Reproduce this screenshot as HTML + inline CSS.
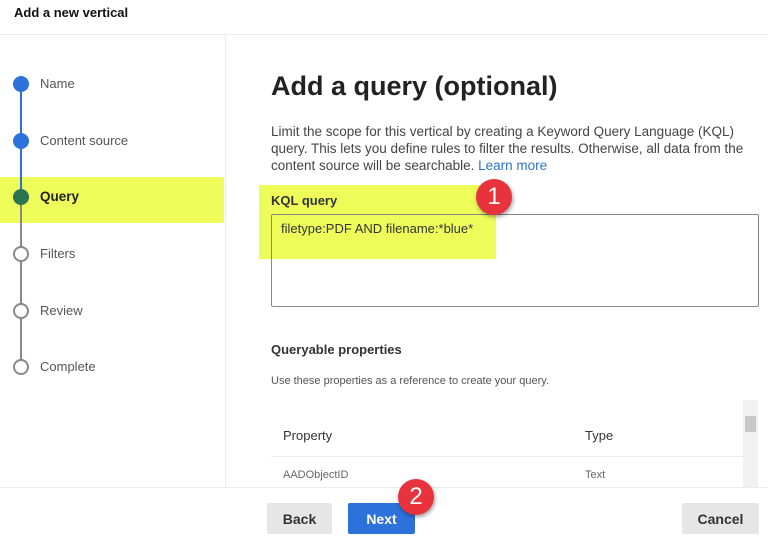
<!DOCTYPE html>
<html><head><style>
*{margin:0;padding:0;box-sizing:border-box}
body{width:768px;height:537px;overflow:hidden;background:#fff;font-family:"Liberation Sans",sans-serif;color:#323130;position:relative}
.a{position:absolute}
.t{font-size:13px;color:#555}
.dot{position:absolute;left:13px;width:16px;height:16px;border-radius:50%}
.open{border:2px solid #8a8886;background:#fff}
.btn{position:absolute;top:503px;height:31px;font-size:14px;font-weight:bold;display:flex;align-items:center;justify-content:center;border-radius:2px}
.badge{position:absolute;width:36px;height:36px;border-radius:50%;background:#e8323c;color:#fff;font-size:24px;display:flex;align-items:center;justify-content:center;box-shadow:1px 2px 4px rgba(0,0,0,.4)}
</style></head><body>
<div class="a" style="left:14px;top:5px;font-size:13px;font-weight:bold;color:#111">Add a new vertical</div>
<div class="a" style="left:0;top:34px;width:768px;height:1px;background:#edebe9"></div>
<div class="a" style="left:225px;top:35px;width:1px;height:452px;background:#edebe9"></div>
<div class="a" style="left:0;top:177px;width:224px;height:46px;background:#eefc5a"></div>
<div class="a" style="left:20px;top:92px;width:2px;height:105px;background:#2d6fd6"></div>
<div class="a" style="left:20px;top:205px;width:2px;height:160px;background:#8a8886"></div>
<div class="dot" style="top:76px;background:#2d72db"></div>
<div class="dot" style="top:133px;background:#2d72db"></div>
<div class="dot" style="top:189px;background:#2c7350"></div>
<div class="dot open" style="top:246px"></div>
<div class="dot open" style="top:303px"></div>
<div class="dot open" style="top:359px"></div>
<div class="a t" style="left:40px;top:76px">Name</div>
<div class="a t" style="left:40px;top:133px">Content source</div>
<div class="a" style="left:40px;top:189px;font-size:13.5px;font-weight:bold;color:#222">Query</div>
<div class="a t" style="left:40px;top:246px">Filters</div>
<div class="a t" style="left:40px;top:303px">Review</div>
<div class="a t" style="left:40px;top:359px">Complete</div>

<div class="a" style="left:271px;top:71px;font-size:27px;font-weight:bold;color:#222">Add a query (optional)</div>
<div class="a" style="left:271px;top:123px;width:490px;font-size:13.5px;line-height:17px;color:#444">Limit the scope for this vertical by creating a Keyword Query Language (KQL) query. This lets you define rules to filter the results. Otherwise, all data from the content source will be searchable. <span style="color:#2b75c9">Learn more</span></div>
<div class="a" style="left:259px;top:185px;width:237px;height:74px;background:#eefc5a"></div>
<div class="a" style="left:271px;top:193px;font-size:13px;font-weight:bold;color:#333">KQL query</div>
<div class="a" style="left:271px;top:214px;width:488px;height:93px;border:1px solid #8a8886;border-radius:2px"></div>
<div class="a" style="left:281px;top:221px;font-size:13px;color:#333">filetype:PDF AND filename:*blue*</div>
<div class="badge" style="left:476px;top:179px">1</div>
<div class="a" style="left:271px;top:342px;font-size:13px;font-weight:bold;color:#333">Queryable properties</div>
<div class="a" style="left:271px;top:375px;font-size:11px;color:#555">Use these properties as a reference to create your query.</div>
<div class="a" style="left:743px;top:400px;width:15px;height:87px;background:#f1f1f1"></div>
<div class="a" style="left:745px;top:416px;width:11px;height:16px;background:#c8c8c8"></div>
<div class="a" style="left:283px;top:428px;font-size:13px;color:#333">Property</div>
<div class="a" style="left:585px;top:428px;font-size:13px;color:#333">Type</div>
<div class="a" style="left:271px;top:456px;width:472px;height:1px;background:#edebe9"></div>
<div class="a" style="left:283px;top:469px;font-size:11px;color:#666">AADObjectID</div>
<div class="a" style="left:585px;top:469px;font-size:11px;color:#666">Text</div>

<div class="a" style="left:0;top:487px;width:768px;height:50px;background:#fff;border-top:1px solid #edebe9"></div>
<div class="btn" style="left:267px;width:65px;background:#e6e6e6;color:#333">Back</div>
<div class="btn" style="left:348px;width:67px;background:#2d72db;color:#fff">Next</div>
<div class="btn" style="left:682px;width:77px;background:#e6e6e6;color:#333">Cancel</div>
<div class="badge" style="left:398px;top:479px">2</div>
</body></html>
